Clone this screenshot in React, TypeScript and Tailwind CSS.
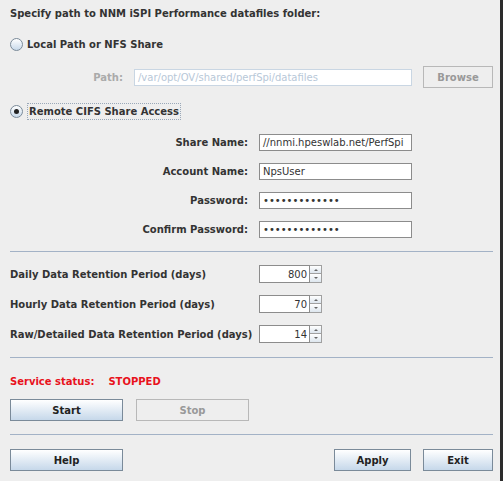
import React from "react";

const font = { fontFamily: '"DejaVu Sans", "Noto Sans", sans-serif' };

function Radio({ checked }: { checked?: boolean }) {
  return (
    <span className="flex h-[13px] w-[13px] items-center justify-center rounded-full border border-[#7a8a99] bg-gradient-to-b from-white to-[#c8d9ea]">
      {checked && <span className="h-[5px] w-[5px] rounded-full bg-[#222]" />}
    </span>
  );
}

function Button({ label, disabled, className = "" }: { label: string; disabled?: boolean; className?: string }) {
  return (
    <div
      className={`flex h-[22px] items-center justify-center text-[10px] font-bold ${
        disabled
          ? "border border-[#b8b8b8] bg-[#eeeeee] text-[#999]"
          : "border border-[#7a8a99] bg-gradient-to-b from-white to-[#c6d8ea] text-[#222]"
      } ${className}`}
    >
      {label}
    </div>
  );
}

function Field({ value, disabled, className = "" }: { value: string; disabled?: boolean; className?: string }) {
  return (
    <div
      className={`flex h-[17px] items-center px-[3px] text-[10px] ${
        disabled ? "border border-[#c9d6e3] bg-white text-[#b8c8d8]" : "border border-[#8c8c8c] bg-white text-[#333]"
      } ${className}`}
    >
      {value}
    </div>
  );
}

function FormRow({ label, value }: { label: string; value: string }) {
  return (
    <div className="flex h-[17px] items-center">
      <div className="w-[248px] text-right text-[10px] font-bold text-[#333]">{label}</div>
      <Field value={value} className="ml-[11px] w-[153px]" />
    </div>
  );
}

function Spinner({ label, value }: { label: string; value: string }) {
  return (
    <div className="flex h-[18px] items-center">
      <div className="w-[249px] text-[10px] font-bold text-[#333]">{label}</div>
      <div className="flex h-[18px] w-[51px] items-center justify-end border border-[#8c8c8c] bg-white pr-[2px] text-[10px] text-[#333]">
        {value}
      </div>
      <div className="flex h-[18px] w-[12px] flex-col">
        <div className="flex h-[9px] items-center justify-center border border-l-0 border-[#a0a0a0] bg-gradient-to-b from-white to-[#dde6ee]">
          <span className="h-0 w-0 border-x-[2px] border-b-[2px] border-x-transparent border-b-[#666]" />
        </div>
        <div className="flex h-[9px] items-center justify-center border border-l-0 border-t-0 border-[#a0a0a0] bg-gradient-to-b from-white to-[#dde6ee]">
          <span className="h-0 w-0 border-x-[2px] border-t-[2px] border-x-transparent border-t-[#666]" />
        </div>
      </div>
    </div>
  );
}

function Separator() {
  return <div className="ml-[10px] mr-[7px] h-px bg-[#a3b2c6]" />;
}

export default function App() {
  const dots = "•••••••••••••";
  return (
    <div
      style={font}
      className="flex h-[481px] w-[503px] flex-col border-r-[3px] border-[#2c2c2c] bg-[#eeeeee] text-[#333]"
    >
      <div className="pl-[10px] pt-[8px] text-[10px] font-bold leading-[12px]">
        Specify path to NNM iSPI Performance datafiles folder:
      </div>

      <div className="mt-[17px] flex items-center gap-[4px] pl-[10px]">
        <Radio />
        <span className="text-[10px] font-bold">Local Path or NFS Share</span>
      </div>

      <div className="mt-[14px] flex items-center pr-[7px]">
        <div className="w-[123px] text-right text-[10px] font-bold text-[#aaa]">Path:</div>
        <Field disabled value="/var/opt/OV/shared/perfSpi/datafiles" className="ml-[11px] w-[278px]" />
        <div className="flex-1" />
        <Button disabled label="Browse" className="w-[70px]" />
      </div>

      <div className="mt-[15px] flex items-center gap-[4px] pl-[10px]">
        <Radio checked />
        <span className="border border-dotted border-[#9aa8b8] px-[1px] text-[10px] font-bold leading-[15px]">
          Remote CIFS Share Access
        </span>
      </div>

      <div className="mt-[14px] flex flex-col gap-[12px]">
        <FormRow label="Share Name:" value="//nnmi.hpeswlab.net/PerfSpi" />
        <FormRow label="Account Name:" value="NpsUser" />
        <FormRow label="Password:" value={dots} />
        <FormRow label="Confirm Password:" value={dots} />
      </div>

      <div className="mt-[13px]">
        <Separator />
      </div>

      <div className="mt-[13px] flex flex-col gap-[12px] pl-[10px]">
        <Spinner label="Daily Data Retention Period (days)" value="800" />
        <Spinner label="Hourly Data Retention Period (days)" value="70" />
        <Spinner label="Raw/Detailed Data Retention Period (days)" value="14" />
      </div>

      <div className="mt-[14px]">
        <Separator />
      </div>

      <div className="mt-[16px] flex pl-[10px] text-[10px] font-bold text-[#e8121c]">
        <span>Service status:</span>
        <span className="ml-[14px]">STOPPED</span>
      </div>

      <div className="mt-[10px] flex gap-[13px] pl-[10px]">
        <Button label="Start" className="w-[113px]" />
        <Button disabled label="Stop" className="w-[113px]" />
      </div>

      <div className="mt-[13px]">
        <Separator />
      </div>

      <div className="mt-[14px] flex pl-[10px] pr-[7px]">
        <Button label="Help" className="w-[113px]" />
        <div className="flex-1" />
        <Button label="Apply" className="w-[77px]" />
        <Button label="Exit" className="ml-[12px] w-[70px]" />
      </div>
    </div>
  );
}
